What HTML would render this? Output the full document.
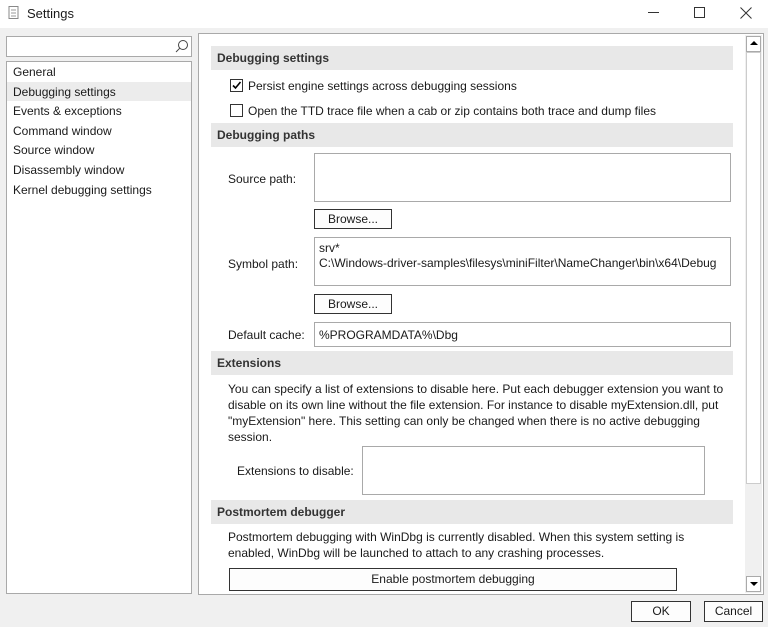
<!DOCTYPE html>
<html><head><style>
*{box-sizing:border-box;margin:0;padding:0}
body{width:768px;height:627px;background:#f0f0f0;font-family:"Liberation Sans",sans-serif;font-size:12px;color:#1a1a1a;position:relative;overflow:hidden}
.a{position:absolute}
.box{position:absolute;background:#fff;border:1px solid #a9a9a9}
.hdr{position:absolute;left:211px;width:522px;height:24px;background:#e8e8e8;font-weight:bold;padding:5px 6px;font-size:12px;color:#333}
.btn{position:absolute;background:#fdfdfd;border:1px solid #333;text-align:center;font-size:12px;line-height:18px}
.cb{position:absolute;width:13px;height:13px;border:1px solid #333;background:#fff}
.li{position:absolute;left:7px;width:184px;height:19px;padding:3px 6px;font-size:12px}
</style></head><body>
<div class="a" style="left:0;top:0;width:768px;height:28px;background:#fff"></div>
<svg class="a" style="left:8px;top:6px" width="12" height="14"><rect x="1" y="0.5" width="9" height="12" fill="#fff" stroke="#888"/><line x1="3" y1="4" x2="8" y2="4" stroke="#999"/><line x1="3" y1="7" x2="8" y2="7" stroke="#999"/><line x1="3" y1="10" x2="8" y2="10" stroke="#999"/></svg>
<div class="a" style="left:27px;top:6px;font-size:13px">Settings</div>
<div class="a" style="left:648px;top:12px;width:11px;height:1px;background:#333"></div>
<div class="a" style="left:694px;top:7px;width:11px;height:11px;border:1px solid #333"></div>
<svg class="a" style="left:740px;top:7px" width="12" height="12"><path d="M0.5 0.5L11.5 11.5M11.5 0.5L0.5 11.5" stroke="#333"/></svg>

<div class="box" style="left:6px;top:36px;width:186px;height:21px"></div>
<svg class="a" style="left:175px;top:39px" width="14" height="14"><circle cx="8" cy="6" r="4.5" fill="none" stroke="#444"/><line x1="4.8" y1="9.2" x2="1" y2="13" stroke="#444"/></svg>
<div class="box" style="left:6px;top:61px;width:186px;height:533px"></div>
<div class="li" style="top:62px">General</div>
<div class="li" style="top:82px;background:#ececec">Debugging settings</div>
<div class="li" style="top:101px">Events &amp; exceptions</div>
<div class="li" style="top:121px">Command window</div>
<div class="li" style="top:140px">Source window</div>
<div class="li" style="top:160px">Disassembly window</div>
<div class="li" style="top:180px">Kernel debugging settings</div>

<div class="box" style="left:198px;top:33px;width:566px;height:562px"></div>
<div class="a" style="left:745px;top:35px;width:17px;height:558px;background:#f0f0f0"></div>
<div class="a" style="left:746px;top:36px;width:15px;height:16px;border:1px solid #aaa;background:#fff"></div>
<div class="a" style="left:750px;top:41px;width:0;height:0;border-left:4px solid transparent;border-right:4px solid transparent;border-bottom:4px solid #000"></div>
<div class="a" style="left:746px;top:52px;width:15px;height:432px;background:#fff;border:1px solid #ccc"></div>
<div class="a" style="left:746px;top:576px;width:15px;height:16px;border:1px solid #aaa;background:#fff"></div>
<div class="a" style="left:750px;top:582px;width:0;height:0;border-left:4px solid transparent;border-right:4px solid transparent;border-top:4px solid #000"></div>

<div class="hdr" style="top:46px">Debugging settings</div>
<div class="cb" style="left:230px;top:79px"></div>
<svg class="a" style="left:231px;top:80px" width="11" height="11"><path d="M2 5.5L4.5 8L9.5 2" stroke="#000" stroke-width="1.6" fill="none"/></svg>
<div class="a" style="left:248px;top:79px">Persist engine settings across debugging sessions</div>
<div class="cb" style="left:230px;top:104px"></div>
<div class="a" style="left:248px;top:104px">Open the TTD trace file when a cab or zip contains both trace and dump files</div>
<div class="hdr" style="top:123px">Debugging paths</div>
<div class="a" style="left:228px;top:172px">Source path:</div>
<div class="box" style="left:314px;top:153px;width:417px;height:49px"></div>
<div class="btn" style="left:314px;top:209px;width:78px;height:20px">Browse...</div>
<div class="a" style="left:228px;top:257px">Symbol path:</div>
<div class="box" style="left:314px;top:237px;width:417px;height:49px;padding:3px 4px;line-height:15px">srv*<br>C:\Windows-driver-samples\filesys\miniFilter\NameChanger\bin\x64\Debug</div>
<div class="btn" style="left:314px;top:294px;width:78px;height:20px">Browse...</div>
<div class="a" style="left:228px;top:328px">Default cache:</div>
<div class="box" style="left:314px;top:322px;width:417px;height:25px;padding:5px 4px">%PROGRAMDATA%\Dbg</div>
<div class="hdr" style="top:351px">Extensions</div>
<div class="a" style="left:228px;top:381px;width:500px;line-height:16px">You can specify a list of extensions to disable here. Put each debugger extension you want to disable on its own line without the file extension. For instance to disable myExtension.dll, put "myExtension" here. This setting can only be changed when there is no active debugging session.</div>
<div class="a" style="left:237px;top:464px">Extensions to disable:</div>
<div class="box" style="left:362px;top:446px;width:343px;height:49px"></div>
<div class="hdr" style="top:500px">Postmortem debugger</div>
<div class="a" style="left:228px;top:529px;width:500px;line-height:16px">Postmortem debugging with WinDbg is currently disabled. When this system setting is enabled, WinDbg will be launched to attach to any crashing processes.</div>
<div class="btn" style="left:229px;top:568px;width:448px;height:23px;line-height:21px">Enable postmortem debugging</div>

<div class="btn" style="left:631px;top:601px;width:60px;height:21px">OK</div>
<div class="btn" style="left:704px;top:601px;width:59px;height:21px">Cancel</div>
</body></html>
